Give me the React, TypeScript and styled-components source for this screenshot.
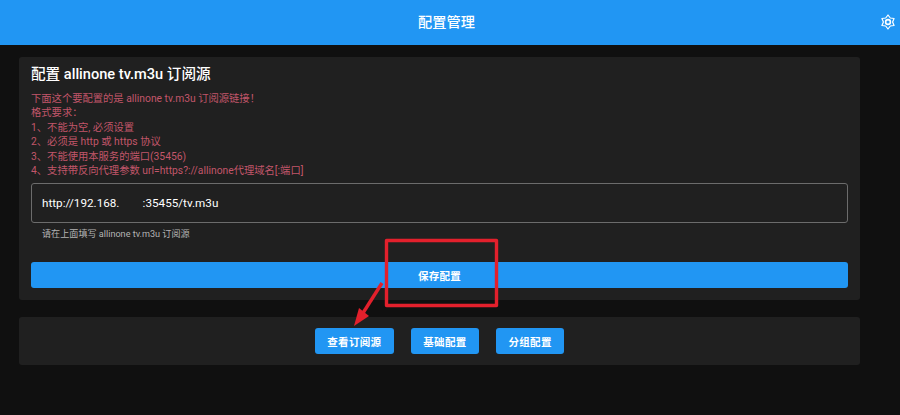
import { createGlobalStyle } from 'styled-components';
import styled from 'styled-components';

const GlobalStyle = createGlobalStyle`
  html, body {
    margin: 0;
    padding: 0;
    height: 100%;
    background-color: #101010;
    overflow: hidden;
  }
`;

const fontStack = `Roboto, "Noto Sans CJK SC", sans-serif`;

const Page = styled.div`
  position: relative;
  width: 900px;
  height: 415px;
  overflow: hidden;
  font-family: ${fontStack};
  color: #fff;
  background-color: #101010;
`;

const Header = styled.header`
  position: relative;
  display: flex;
  align-items: center;
  justify-content: center;
  box-sizing: border-box;
  height: 45px;
  padding: 0 7px 3px 0;
  background-color: #2196f3;
`;

const HeaderTitle = styled.h1`
  margin: 0;
  font-size: 14.2px;
  font-weight: 500;
`;

const ThemeButton = styled.button`
  position: absolute;
  top: 14px;
  right: 4px;
  display: flex;
  width: 16px;
  height: 16px;
  padding: 0;
  border: none;
  color: #fff;
  background-color: transparent;
`;

const Main = styled.main`
  display: flex;
  flex-direction: column;
  gap: 17px;
  width: 841px;
  margin-left: 19px;
  padding-top: 12px;
`;

const Card = styled.section`
  display: flex;
  flex-direction: column;
  padding: 7px 12px 12px;
  border-radius: 3px;
  background-color: #202020;
`;

const Title = styled.h2`
  margin: 0 0 8px;
  font-size: 14.6px;
  line-height: 20px;
  font-weight: 500;
`;

const Notice = styled.div`
  margin-bottom: 5px;
  font-size: 10.3px;
  line-height: 14.4px;
  color: #c2566a;
`;

const UrlInput = styled.input`
  box-sizing: border-box;
  width: 100%;
  height: 40px;
  padding: 0 10px;
  border: 1px solid #6c6c6c;
  border-radius: 3px;
  outline: none;
  white-space: pre;
  font-family: ${fontStack};
  font-size: 11.7px;
  color: #fff;
  background-color: transparent;
`;

const Helper = styled.p`
  margin: 5px 0 22px 11px;
  font-size: 9.1px;
  line-height: 12px;
  color: #b4b4b4;
`;

const SaveButton = styled.button`
  width: 100%;
  height: 26px;
  padding: 0;
  border: none;
  border-radius: 3px;
  font-family: ${fontStack};
  font-size: 10.5px;
  font-weight: 700;
  letter-spacing: 0.3px;
  color: #fff;
  background-color: #2196f3;
`;

const ActionCard = styled.section`
  display: flex;
  justify-content: center;
  gap: 17px;
  padding: 11px 0;
  border-radius: 3px;
  background-color: #202020;
`;

const ActionButton = styled.button`
  height: 26px;
  padding: 0 12.5px;
  border: none;
  border-radius: 3px;
  font-family: ${fontStack};
  font-size: 10.5px;
  font-weight: 700;
  letter-spacing: 0.3px;
  color: #fff;
  background-color: #2196f3;
`;

const Annotation = styled.svg`
  position: absolute;
  top: 0;
  left: 0;
  pointer-events: none;
`;

const ModeIcon = () => (
  <svg viewBox="0 0 16 16" width="16" height="16" fill="none" stroke="currentColor">
    <path strokeWidth="1.2" strokeLinejoin="round" d="M8 1 10.3 4 14.06 4.5 12.6 8 14.06 11.5 10.3 12 8 15 5.7 12 1.94 11.5 3.4 8 1.94 4.5 5.7 4Z" />
    <circle cx="8" cy="8" r="2.4" strokeWidth="1.6" />
  </svg>
);

const actions = ['查看订阅源', '基础配置', '分组配置'];

const App = () => {
  return (
    <Page>
      <GlobalStyle />
      <Header>
        <HeaderTitle>配置管理</HeaderTitle>
        <ThemeButton>
          <ModeIcon />
        </ThemeButton>
      </Header>
      <Main>
        <Card>
          <Title>配置 allinone tv.m3u 订阅源</Title>
          <Notice>
            下面这个要配置的是 allinone tv.m3u 订阅源链接！
            <br />
            格式要求：
            <br />
            1、不能为空, 必须设置
            <br />
            2、必须是 http 或 https 协议
            <br />
            3、不能使用本服务的端口(35456)
            <br />
            4、支持带反向代理参数 url=https?://allinone代理域名[:端口]
          </Notice>
          <UrlInput readOnly value="http://192.168.        :35455/tv.m3u" />
          <Helper>请在上面填写 allinone tv.m3u 订阅源</Helper>
          <SaveButton>保存配置</SaveButton>
        </Card>
        <ActionCard>
          {actions.map((label) => (
            <ActionButton key={label}>{label}</ActionButton>
          ))}
        </ActionCard>
      </Main>
      <Annotation width="900" height="415" viewBox="0 0 900 415">
        <rect x="386.5" y="240.5" width="110" height="65" fill="none" stroke="#e3202c" strokeWidth="3.4" strokeLinejoin="round" />
        <path d="M382 283 L363 313" stroke="#e3202c" strokeWidth="3.4" fill="none" />
        <path d="M354 326 L359 308 L369 316 Z" fill="#e3202c" />
      </Annotation>
    </Page>
  );
};

export default App;
